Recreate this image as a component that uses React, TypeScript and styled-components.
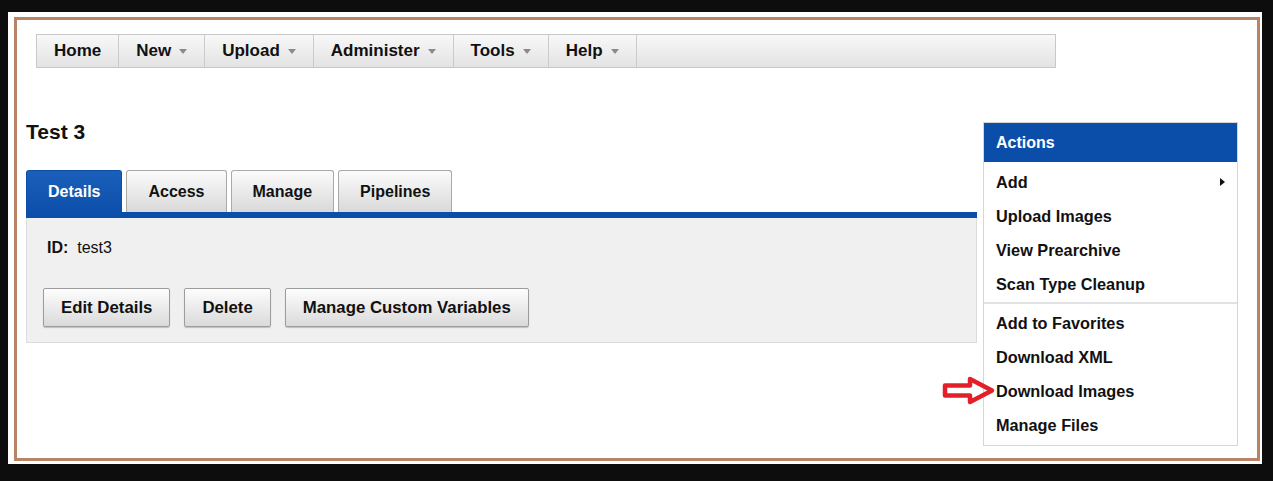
import styled, { createGlobalStyle } from "styled-components";

const GlobalStyle = createGlobalStyle`
    html, body { margin:0;padding:0;background:#0d0d0d; }
    body { font-family:"Liberation Sans", Arial, sans-serif;color:#111; }
    * { box-sizing:border-box; }
`

const blue = '#0b4ea9';

const navItems = [
    { label: 'Home', caret: false },
    { label: 'New', caret: true },
    { label: 'Upload', caret: true },
    { label: 'Administer', caret: true },
    { label: 'Tools', caret: true },
    { label: 'Help', caret: true },
];

const tabs = ['Details', 'Access', 'Manage', 'Pipelines'];

const menuGroups = [
    ['Add', 'Upload Images', 'View Prearchive', 'Scan Type Cleanup'],
    ['Add to Favorites', 'Download XML', 'Download Images', 'Manage Files'],
];

const RedArrow = () => (
    <ArrowSvg width="56" height="30" viewBox="0 0 56 30">
        <path
            d="M4,9.5 L29,9.5 L29,3 L51,14.5 L29,26 L29,19.5 L4,19.5 Z"
            fill="none"
            stroke="#e3202a"
            strokeWidth="4.5"
            strokeLinejoin="round"
        />
    </ArrowSvg>
)

const App = () => {
    return (
        <>
            <GlobalStyle />
            <Frame>
                <Inner>
                    <NavBar>
                        {navItems.map(item => (
                            <NavItem key={item.label}>
                                {item.label}
                                {item.caret && <DownCaret />}
                            </NavItem>
                        ))}
                    </NavBar>
                    <Row>
                        <Main>
                            <Title>Test 3</Title>
                            <TabRow>
                                {tabs.map((t, i) => (
                                    <Tab key={t} $active={i === 0}>{t}</Tab>
                                ))}
                            </TabRow>
                            <Panel>
                                <IdLine><b>ID:</b>&nbsp; test3</IdLine>
                                <ButtonRow>
                                    <Button>Edit Details</Button>
                                    <Button>Delete</Button>
                                    <Button>Manage Custom Variables</Button>
                                </ButtonRow>
                            </Panel>
                        </Main>
                        <Actions>
                            <ActionsHead>Actions</ActionsHead>
                            {menuGroups.map((group, gi) => (
                                <MenuGroup key={gi} $first={gi === 0}>
                                    {group.map(label => (
                                        <MenuItem key={label}>
                                            {label}
                                            {label === 'Add' && <RightCaret />}
                                            {label === 'Download Images' && <RedArrow />}
                                        </MenuItem>
                                    ))}
                                </MenuGroup>
                            ))}
                        </Actions>
                    </Row>
                </Inner>
            </Frame>
        </>
    )
}

const Frame = styled.div`
    margin:12px 0 0 8px;width:1254px;height:452px;
    background:#fff;padding:5px 2px 3px 6px;
`

const Inner = styled.div`
    height:100%;border:3px solid #b98466;padding:14px 0 0 9px;
`

const NavBar = styled.div`
    display:flex;margin-left:10px;width:1020px;height:34px;
    border:1px solid #c8c8c8;
    background:linear-gradient(#f8f8f8, #e3e3e3);
`

const NavItem = styled.div`
    display:flex;align-items:center;gap:8px;padding:0 17px;
    border-right:1px solid #cbcbcb;
    font-size:17px;font-weight:bold;color:#111;
`

const DownCaret = styled.span`
    width:0;height:0;
    border-left:4.5px solid transparent;border-right:4.5px solid transparent;
    border-top:5px solid #8a8a8a;
`

const Row = styled.div`
    display:flex;align-items:flex-start;gap:6px;margin-top:51px;
`

const Main = styled.div`
    width:951px;
`

const Title = styled.h1`
    margin:0;font-size:21px;line-height:26px;font-weight:bold;
`

const TabRow = styled.div`
    display:flex;gap:4px;margin-top:25px;height:42px;
    border-bottom:6px solid ${blue};
    box-sizing:content-box;
`

const Tab = styled.div<{ $active?: boolean }>`
    display:flex;align-items:center;padding:${({$active}) => $active ? '0 21px 6px' : '0 21px'};
    height:${({$active}) => $active ? '48px' : '42px'};
    border:1px solid ${({$active}) => $active ? blue : '#a9a9a9'};border-bottom:none;
    border-radius:3px 3px 0 0;
    background:${({$active}) => $active ? `linear-gradient(#1a5fba, ${blue})` : 'linear-gradient(#fbfbfb, #d9d9d9)'};
    color:${({$active}) => $active ? '#fff' : '#111'};
    font-size:16px;font-weight:bold;
`

const Panel = styled.div`
    background:#f0f0f0;border:1px solid #dcdcdc;border-top:none;
    padding:20px 16px 15px;
`

const IdLine = styled.div`
    padding-left:4px;font-size:16px;line-height:20px;
`

const ButtonRow = styled.div`
    display:flex;gap:14px;margin-top:30px;
`

const Button = styled.button`
    height:39px;padding:0 17px;
    font-family:inherit;font-size:16.8px;font-weight:bold;color:#111;
    background:linear-gradient(#fdfdfd, #dadada);
    border:1px solid #9c9c9c;border-radius:2px;
    box-shadow:0 1px 1px rgba(0,0,0,0.2);
`

const Actions = styled.div`
    width:255px;margin-top:3px;border:1px solid #d6d6d6;background:#fff;
`

const ActionsHead = styled.div`
    height:39px;display:flex;align-items:center;padding-left:12px;
    background:${blue};color:#fff;font-size:16px;font-weight:bold;
`

const MenuGroup = styled.div<{ $first?: boolean }>`
    padding:${({$first}) => $first ? '3px 0 1px' : '2px 0 3px'};
    border-top:${({$first}) => $first ? 'none' : '2px solid #e2e2e2'};
`

const MenuItem = styled.div`
    position:relative;display:flex;align-items:center;justify-content:space-between;
    height:34px;padding:0 12px;
    font-size:16.3px;font-weight:bold;color:#111;
`

const RightCaret = styled.span`
    width:0;height:0;
    border-top:4.5px solid transparent;border-bottom:4.5px solid transparent;
    border-left:5px solid #111;
`

const ArrowSvg = styled.svg`
    position:absolute;left:-43px;top:2px;
`

export default App;
